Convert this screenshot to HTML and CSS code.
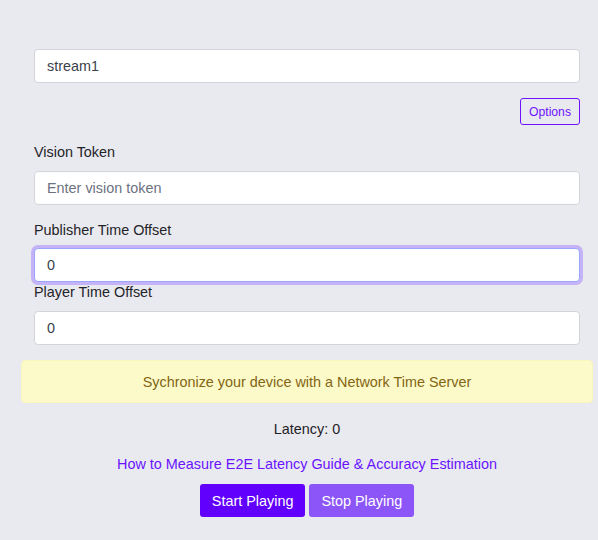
FILE: index.html
```html
<!DOCTYPE html>
<html>
<head>
<meta charset="utf-8">
<link rel="stylesheet" href="styles.css">
</head>
<body>
<div class="page">
  <input class="field" type="text" value="stream1">
  <div class="options-row"><button class="btn-options">Options</button></div>
  <label class="label first">Vision Token</label>
  <input class="field" type="text" placeholder="Enter vision token">
  <label class="label">Publisher Time Offset</label>
  <input class="field focused" type="text" value="0">
  <label class="label tight">Player Time Offset</label>
  <input class="field" type="text" value="0">
  <div class="alert">Sychronize your device with a Network Time Server</div>
  <div class="latency">Latency: 0</div>
  <div class="guide"><a href="#" class="guide-link">How to Measure E2E Latency Guide &amp; Accuracy Estimation</a></div>
  <div class="actions">
    <button class="btn btn-start">Start Playing</button>
    <button class="btn btn-stop">Stop Playing</button>
  </div>
</div>
</body>
</html>
```
FILE: styles.css
```css
html, body {
  margin: 0;
  padding: 0;
  background: #e9eaef;
}
body {
  font-family: "Liberation Sans", Arial, sans-serif;
  font-size: 14.4px;
  color: #1f2328;
}
.page {
  width: 546px;
  padding: 49px 0 0 34px;
  display: flex;
  flex-direction: column;
}
.field {
  box-sizing: border-box;
  width: 546px;
  height: 34px;
  margin: 0;
  padding: 0 12px;
  border: 1px solid #d3d5db;
  border-radius: 4px;
  background: #fff;
  font-family: "Liberation Sans", Arial, sans-serif;
  font-size: 14.4px;
  color: #3b414b;
  outline: none;
}
.field::placeholder {
  color: #6b7280;
}
.field.focused {
  border-color: #9aa6fb;
  box-shadow: 0 0 0 3px #c4b3f7;
}
.options-row {
  display: flex;
  justify-content: flex-end;
  margin-top: 15px;
}
.btn-options {
  box-sizing: border-box;
  height: 27px;
  padding: 0 8px;
  border: 1px solid #6d12ff;
  border-radius: 3px;
  background: transparent;
  color: #6d12ff;
  font-family: "Liberation Sans", Arial, sans-serif;
  font-size: 12.2px;
}
.label {
  display: block;
  line-height: 20px;
  margin: 15px 0 8px;
  color: #1f2328;
}
.label.first {
  margin-top: 17px;
  margin-bottom: 9px;
}
.label.tight {
  margin-top: 0;
  margin-bottom: 9px;
}
.alert {
  margin: 15px -13px 0;
  height: 43px;
  display: flex;
  align-items: center;
  justify-content: center;
  background: #fcfac9;
  border: 1px solid #faf5bd;
  border-radius: 4px;
  box-sizing: border-box;
  color: #836514;
}
.latency {
  text-align: center;
  line-height: 20px;
  margin-top: 16px;
  color: #1f2328;
}
.guide {
  text-align: center;
  line-height: 20px;
  margin-top: 15px;
}
.guide-link {
  color: #6a13ff;
  text-decoration: none;
}
.actions {
  display: flex;
  justify-content: center;
  gap: 4px;
  margin-top: 10px;
}
.btn {
  box-sizing: border-box;
  height: 33px;
  padding: 0 12px;
  border: none;
  border-radius: 3px;
  color: #fff;
  font-family: "Liberation Sans", Arial, sans-serif;
  font-size: 14.4px;
}
.btn-start {
  background: #6200fe;
}
.btn-stop {
  background: #8c55f7;
}
```
